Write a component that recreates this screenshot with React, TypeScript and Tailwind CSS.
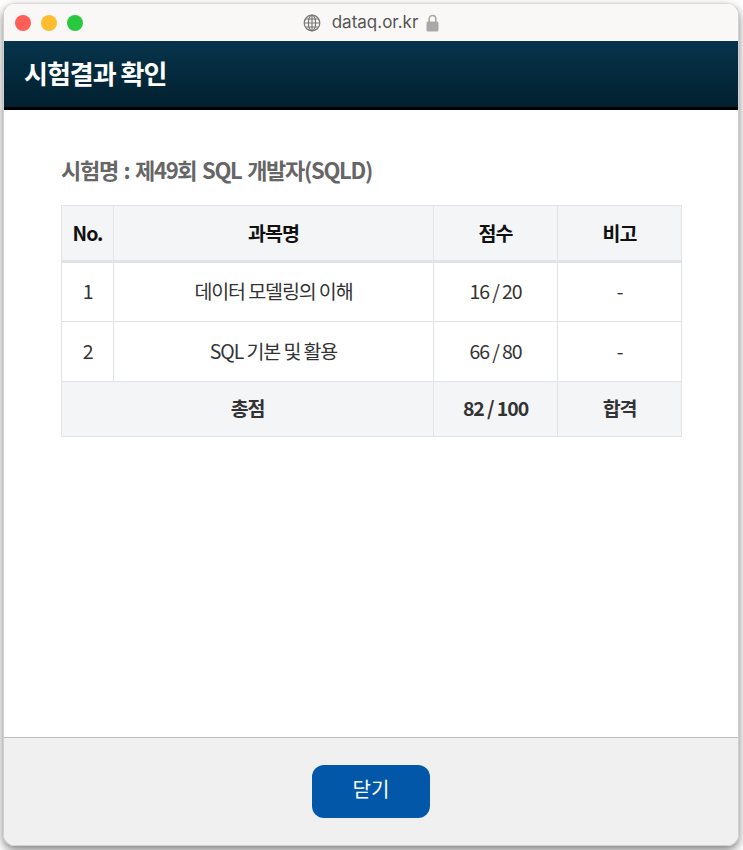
const font = "font-['Noto_Sans_CJK_KR','Noto_Sans',sans-serif]";

const thClass = "border-r border-b-[3px] border-[#e0e3e8] bg-[#f4f5f7] font-bold text-[19.5px] tracking-[-1px] text-[#111] pb-[1px]";
const tdClass = "border-r border-b border-[#e0e3e8] text-[19.5px] font-normal tracking-[-1.1px] text-[#333] text-center pb-[2px]";
const totalClass = "border-r border-b border-[#e0e3e8] bg-[#f4f5f7] text-[19.5px] font-bold tracking-[-1.1px] text-[#333] text-center pb-[3px]";

const rows = [
  { no: "1", name: "데이터 모델링의 이해", score: "16 / 20", height: "h-[59px]" },
  { no: "2", name: "SQL 기본 및 활용", score: "66 / 80", height: "h-[60px]" },
];

function GlobeIcon() {
  return (
    <svg width="18" height="18" viewBox="0 0 18 18" fill="none" stroke="#777" strokeWidth="1.2">
      <circle cx="9" cy="9" r="7.8" />
      <ellipse cx="9" cy="9" rx="3.6" ry="7.8" />
      <path d="M9 1.2v15.6M1.2 9h15.6M2.3 5h13.4M2.3 13h13.4" />
    </svg>
  );
}

function LockIcon() {
  return (
    <svg width="13" height="18" viewBox="0 0 13 18">
      <path d="M3.2 8V4.8a3.3 3.3 0 0 1 6.6 0V8" fill="none" stroke="#a8a8a8" strokeWidth="1.6" />
      <rect x="0.5" y="7.5" width="12" height="10" rx="1.6" fill="#a8a8a8" />
    </svg>
  );
}

export default function App() {
  return (
    <div className={`w-[743px] h-[850px] bg-white pt-[3px] pl-[3px] overflow-hidden ${font}`}>
      <div className="w-[736px] h-[843px] flex flex-col rounded-[12px] overflow-hidden border border-[#d0d0d0] border-t-[#d8d8d8] shadow-[0_4px_10px_rgba(0,0,0,0.5)]">
        <div className="relative h-[37px] shrink-0 bg-[#faf8f7] flex items-center justify-center">
          <div className="absolute left-[11px] top-[11px] flex gap-[10px]">
            <span className="w-[16px] h-[16px] rounded-full bg-[#ff5f57]" />
            <span className="w-[16px] h-[16px] rounded-full bg-[#febc2e]" />
            <span className="w-[16px] h-[16px] rounded-full bg-[#28c840]" />
          </div>
          <div className="flex items-center">
            <GlobeIcon />
            <span className="ml-[11px] mr-[8px] font-['Inter',sans-serif] text-[17px] text-[#555]">dataq.or.kr</span>
            <LockIcon />
          </div>
        </div>

        <div className="h-[69px] shrink-0 flex items-center pl-[20px] pb-[3px] border-b-[3px] border-black bg-gradient-to-b from-[#07344c] to-[#02202f]">
          <h1 className="text-[26px] font-bold tracking-[-1px] text-white">시험결과 확인</h1>
        </div>

        <div className="flex-1 bg-white px-[57px] pt-[43px]">
          <h2 className="text-[22px] leading-[32px] font-bold tracking-[-1.3px] text-[#666] mb-[20px] [word-spacing:2px]">
            시험명 : 제49회 SQL 개발자(SQLD)
          </h2>
          <table className="w-[621px] table-fixed border-separate border-spacing-0 border-l border-t border-[#e0e3e8]">
            <colgroup>
              <col className="w-[52px]" />
              <col className="w-[320px]" />
              <col className="w-[124px]" />
              <col className="w-[124px]" />
            </colgroup>
            <thead>
              <tr className="h-[57px]">
                <th className={thClass}>No.</th>
                <th className={thClass}>과목명</th>
                <th className={thClass}>점수</th>
                <th className={thClass}>비고</th>
              </tr>
            </thead>
            <tbody>
              {rows.map((row) => (
                <tr key={row.no} className={row.height}>
                  <td className={tdClass}>{row.no}</td>
                  <td className={tdClass}>{row.name}</td>
                  <td className={tdClass}>{row.score}</td>
                  <td className={tdClass}>-</td>
                </tr>
              ))}
              <tr className="h-[55px]">
                <td colSpan={2} className={totalClass}>총점</td>
                <td className={totalClass}>82 / 100</td>
                <td className={totalClass}>합격</td>
              </tr>
            </tbody>
          </table>
        </div>

        <div className="h-[108px] shrink-0 border-t border-[#bdbdbd] bg-[#f0f0f0] flex justify-center pt-[27px]">
          <button className="w-[118px] h-[53px] rounded-[12px] bg-[#0357a8] text-white text-[20px] pb-[5px]">닫기</button>
        </div>
      </div>
    </div>
  );
}
